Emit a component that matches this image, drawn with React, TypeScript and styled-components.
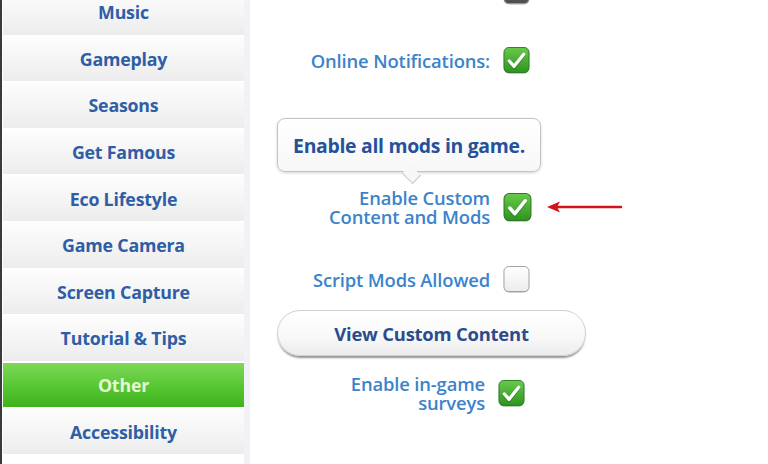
import React from 'react';
import styled, { createGlobalStyle } from 'styled-components';

const GlobalStyle = createGlobalStyle`
  html, body {
    margin: 0;
    padding: 0;
    background: #ffffff;
    overflow: hidden;
  }
  body {
    font-family: "Open Sans", "Liberation Sans", sans-serif;
  }
`;

const Page = styled.div`
  width: 768px;
  height: 464px;
  display: flex;
  overflow: hidden;
  background: #ffffff;
`;

const Sidebar = styled.nav`
  width: 241px;
  flex: none;
  border-left: 2px solid #3a3a3a;
  padding-left: 1px;
  border-right: 6px solid #f1f1f6;
  display: flex;
  flex-direction: column;
  gap: 2px;
  margin-top: -10px;
`;

const NavItem = styled.div<{ $active?: boolean }>`
  height: 44.6px;
  flex: none;
  display: flex;
  align-items: center;
  justify-content: center;
  font-size: 17.8px;
  font-weight: 700;
  letter-spacing: -0.2px;
  color: ${p => (p.$active ? '#e4f7d2' : '#2f5ea6')};
  background: ${p =>
    p.$active
      ? 'linear-gradient(to bottom, #7ed957 0%, #55c632 55%, #3fb21e 100%)'
      : 'linear-gradient(to bottom, #fdfdfd 0%, #f4f4f4 55%, #ececec 100%)'};
`;

const Content = styled.main`
  flex: 1;
  padding-left: 27px;
  display: flex;
  flex-direction: column;
  width: 309px;
  margin-top: -22px;
`;

const Row = styled.div<{ $top: number; $right?: number }>`
  width: 309px;
  margin-top: ${p => p.$top}px;
  display: flex;
  align-items: center;
  justify-content: flex-end;
  padding-right: ${p => p.$right ?? 56}px;
  box-sizing: border-box;
  gap: 13px;
  position: relative;
`;

const Label = styled.div`
  color: #3b83cb;
  font-size: 18.4px;
  font-weight: 600;
  line-height: 19px;
  text-align: right;
  letter-spacing: -0.15px;
  white-space: nowrap;
`;

const Box = styled.div<{ $size?: number }>`
  width: ${p => p.$size ?? 27}px;
  height: ${p => p.$size ?? 27}px;
  flex: none;
  display: flex;
`;

const Tooltip = styled.div`
  margin-top: 44px;
  width: 264px;
  height: 54px;
  box-sizing: border-box;
  border: 1.5px solid #c4c4c8;
  border-radius: 8px;
  background: linear-gradient(to bottom, #ffffff 0%, #f7f7f7 100%);
  box-shadow: 0 1px 3px rgba(0, 0, 0, 0.18);
  display: flex;
  align-items: center;
  justify-content: center;
  color: #25519b;
  font-size: 19.4px;
  font-weight: 700;
  letter-spacing: -0.3px;
  position: relative;

  &::after {
    content: '';
    position: absolute;
    left: 126px;
    bottom: -11px;
    width: 14px;
    height: 14px;
    background: #f7f7f7;
    border-right: 1.5px solid #c4c4c8;
    border-bottom: 1.5px solid #c4c4c8;
    transform: rotate(45deg) scaleY(0.8);
    transform-origin: center;
  }
`;

const PillButton = styled.div`
  margin-top: 17px;
  width: 309px;
  height: 46px;
  box-sizing: border-box;
  border-radius: 23px;
  border: 1px solid #d0d0d4;
  background: linear-gradient(to bottom, #ffffff 0%, #f8f8f8 60%, #ececec 100%);
  box-shadow: 0 3px 2px -1px rgba(60, 60, 60, 0.55);
  display: flex;
  align-items: center;
  justify-content: center;
  color: #2b4c8c;
  font-size: 18.4px;
  font-weight: 700;
  letter-spacing: -0.2px;
`;

const Arrow = styled.svg`
  position: absolute;
  left: 268px;
  top: 50%;
  margin-top: -8px;
`;

const CheckBox: React.FC<{ checked?: boolean; size?: number; dark?: boolean }> = ({ checked, size = 27, dark }) => (
  <Box $size={size}>
    <svg width={size} height={size} viewBox="0 0 28 28">
      <defs>
        <linearGradient id="gOn" x1="0" y1="0" x2="0" y2="1">
          <stop offset="0" stopColor="#69c94b" />
          <stop offset="1" stopColor="#2e9420" />
        </linearGradient>
        <linearGradient id="gOff" x1="0" y1="0" x2="0" y2="1">
          <stop offset="0" stopColor="#ffffff" />
          <stop offset="1" stopColor="#ececee" />
        </linearGradient>
        <linearGradient id="gDark" x1="0" y1="0" x2="0" y2="1">
          <stop offset="0" stopColor="#8a8a8a" />
          <stop offset="1" stopColor="#4a4a4a" />
        </linearGradient>
      </defs>
      {checked ? (
        <>
          <rect x="1" y="1.5" width="26" height="26" rx="5" fill="#235f1a" opacity="0.55" />
          <rect x="1" y="0.5" width="26" height="26" rx="5" fill="url(#gOn)" stroke="#2c7a22" strokeWidth="1" />
          <path d="M6.5 14.5 L11.5 20 L21.5 7.5" fill="none" stroke="#1d5c15" strokeWidth="4" strokeLinecap="round" strokeLinejoin="round" opacity="0.35" transform="translate(0 1)" />
          <path d="M6.5 14.5 L11.5 20 L21.5 7.5" fill="none" stroke="#ffffff" strokeWidth="3.4" strokeLinecap="round" strokeLinejoin="round" />
        </>
      ) : (
        <>
          <rect x="1" y="2" width="26" height="25.5" rx="5" fill="#6a6a6a" opacity="0.5" />
          <rect x="1" y="0.5" width="26" height="26" rx="5" fill={dark ? 'url(#gDark)' : 'url(#gOff)'} stroke="#9c9ca2" strokeWidth="1" />
        </>
      )}
    </svg>
  </Box>
);

const navItems = [
  'Music',
  'Gameplay',
  'Seasons',
  'Get Famous',
  'Eco Lifestyle',
  'Game Camera',
  'Screen Capture',
  'Tutorial & Tips',
  'Other',
  'Accessibility',
];

const App: React.FC = () => {
  return (
    <>
      <GlobalStyle />
      <Page>
        <Sidebar>
          {navItems.map(item => (
            <NavItem key={item} $active={item === 'Other'}>
              {item}
            </NavItem>
          ))}
        </Sidebar>
        <Content>
          <Row $top={0}>
            <Label>Access:</Label>
            <CheckBox dark />
          </Row>
          <Row $top={42}>
            <Label>Online Notifications:</Label>
            <CheckBox checked />
          </Row>
          <Tooltip>Enable all mods in game.</Tooltip>
          <Row $top={16} $right={54}>
            <Label>
              Enable Custom
              <br />
              Content and Mods
            </Label>
            <CheckBox checked size={29} />
            <Arrow width="80" height="16" viewBox="0 0 80 16">
              <path d="M12 8 L76 8" stroke="#d3141b" strokeWidth="2.4" strokeLinecap="round" />
              <path d="M2 8 L15 2.5 L12 8 L15 13.5 Z" fill="#d3141b" />
            </Arrow>
          </Row>
          <Row $top={40}>
            <Label>Script Mods Allowed</Label>
            <CheckBox />
          </Row>
          <PillButton>View Custom Content</PillButton>
          <Row $top={18} $right={61}>
            <Label>
              Enable in-game
              <br />
              surveys
            </Label>
            <CheckBox checked />
          </Row>
        </Content>
      </Page>
    </>
  );
};

export default App;
